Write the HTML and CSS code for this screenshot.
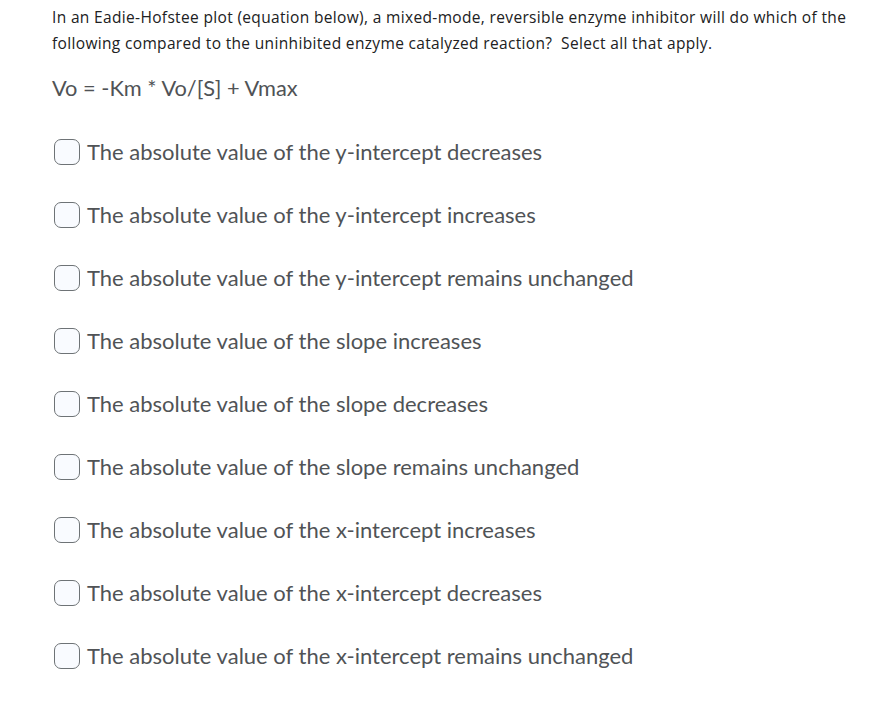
FILE: index.html
```html
<!DOCTYPE html>
<html>
<head>
<meta charset="utf-8">
<link rel="stylesheet" href="styles.css">
</head>
<body>
<div class="page">
  <p class="question">In an Eadie-Hofstee plot (equation below), a mixed-mode, reversible enzyme inhibitor will do which of the following compared to the uninhibited enzyme catalyzed reaction?&nbsp; Select all that apply.</p>
  <p class="equation">Vo = -Km * Vo/[S] + Vmax</p>
  <ul class="options">
    <li class="option"><span class="box"></span><span class="label">The absolute value of the y-intercept decreases</span></li>
    <li class="option"><span class="box"></span><span class="label">The absolute value of the y-intercept increases</span></li>
    <li class="option"><span class="box"></span><span class="label">The absolute value of the y-intercept remains unchanged</span></li>
    <li class="option"><span class="box"></span><span class="label">The absolute value of the slope increases</span></li>
    <li class="option"><span class="box"></span><span class="label">The absolute value of the slope decreases</span></li>
    <li class="option"><span class="box"></span><span class="label">The absolute value of the slope remains unchanged</span></li>
    <li class="option"><span class="box"></span><span class="label">The absolute value of the x-intercept increases</span></li>
    <li class="option"><span class="box"></span><span class="label">The absolute value of the x-intercept decreases</span></li>
    <li class="option"><span class="box"></span><span class="label">The absolute value of the x-intercept remains unchanged</span></li>
  </ul>
</div>
</body>
</html>
```
FILE: styles.css
```css
html, body {
  margin: 0;
  padding: 0;
  background: #ffffff;
}
.page {
  padding: 4px 0 0 52px;
  width: 810px;
}
.question {
  margin: 0;
  font-family: "Open Sans", "Liberation Sans", sans-serif;
  font-size: 15.5px;
  letter-spacing: 0.34px;
  line-height: 26px;
  color: #202122;
}
.equation {
  margin: 19px 0 0 0;
  font-family: Lato, sans-serif;
  font-size: 21.8px;
  line-height: 26px;
  color: #505356;
}
.options {
  list-style: none;
  margin: 38px 0 0 2px;
  padding: 0;
  display: flex;
  flex-direction: column;
  gap: 37px;
}
.option {
  display: flex;
  align-items: center;
  gap: 7px;
  height: 26px;
}
.box {
  width: 26px;
  height: 26px;
  box-sizing: border-box;
  border: 1px solid #6e7376;
  border-radius: 7px;
  background: #f9fbff;
  flex: none;
}
.label {
  font-family: Lato, sans-serif;
  font-size: 22px;
  line-height: 26px;
  color: #505356;
}
```
